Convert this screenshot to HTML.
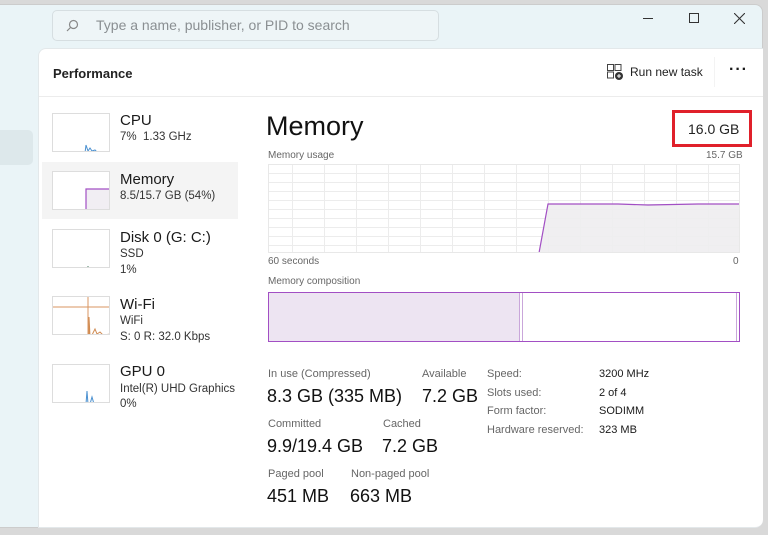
<!DOCTYPE html>
<html><head><meta charset="utf-8"><style>
*{margin:0;padding:0;box-sizing:border-box}
body{width:768px;height:535px;background:#d9d9d9;font-family:"Liberation Sans",sans-serif;position:relative;overflow:hidden;color:#1a1a1a}
.a{position:absolute;white-space:nowrap}
#win{position:absolute;left:0;top:4px;width:763px;height:524px;background:#eaf4f7;border-radius:0 8px 8px 0;border:1px solid #ccc;border-left:none}
#panel{position:absolute;left:38px;top:48px;width:725px;height:480px;background:#fff;border-radius:8px 0 8px 0;border:1px solid #e3e8ea;border-right:none}
.thumb{position:absolute;width:58px;height:39px;border:1px solid #ddd;background:#fff;overflow:hidden}
.t1{font-size:15px}
.t2{font-size:11.5px;color:#333}
.lbl{font-size:11px;color:#666}
.big{font-size:18px;color:#111}
</style></head><body>
<div id="win"></div>
<div class="a" style="left:52px;top:10px;width:387px;height:31px;border:1px solid #d6dee1;border-radius:5px;background:#eef5f7"></div>
<svg class="a" style="left:66px;top:19px" width="13" height="13"><circle cx="7.5" cy="5.5" r="4" fill="none" stroke="#888" stroke-width="1.2"/><line x1="4.5" y1="8.5" x2="1" y2="12" stroke="#888" stroke-width="1.2"/></svg>
<div class="a" style="left:96px;top:17px;font-size:14px;color:#8a8f92">Type a name, publisher, or PID to search</div>
<div class="a" style="left:643px;top:18px;width:10px;height:1px;background:#333"></div>
<div class="a" style="left:689px;top:13px;width:10px;height:10px;border:1px solid #333"></div>
<svg class="a" style="left:734px;top:13px" width="11" height="11"><path d="M0 0L11 11M11 0L0 11" stroke="#333" stroke-width="1.1"/></svg>
<div class="a" style="left:0;top:130px;width:33px;height:35px;background:#dde8eb;border-radius:0 5px 5px 0"></div>
<div id="panel"></div>
<div class="a" style="left:53px;top:66px;font-size:13px;font-weight:bold;color:#222">Performance</div>
<div class="a" style="left:39px;top:96px;width:724px;height:1px;background:#ececec"></div>
<svg class="a" style="left:607px;top:64px" width="17" height="16"><rect x="0.5" y="0.5" width="6" height="6" fill="none" stroke="#444"/><rect x="8" y="0.5" width="6" height="6" fill="none" stroke="#444"/><rect x="0.5" y="8" width="6" height="6" fill="none" stroke="#444"/><circle cx="12" cy="12" r="4" fill="#333"/><path d="M12 10v4M10 12h4" stroke="#fff" stroke-width="1"/></svg>
<div class="a" style="left:630px;top:65px;font-size:12px;color:#222">Run new task</div>
<div class="a" style="left:714px;top:57px;width:1px;height:30px;background:#f3f3f3"></div>
<div class="a" style="left:729px;top:61px;font-size:16px;font-weight:bold;letter-spacing:1px">···</div>

<div class="a" style="left:42px;top:162px;width:196px;height:57px;background:#f4f4f4"></div>
<div class="thumb" style="left:52px;top:113px"><svg width="58" height="39"><path d="M32 39L33 31 35 37 37 34 39 37 42 36 44 38 58 38" stroke="#4a90d0" fill="none" stroke-width="1"/></svg></div>
<div class="a t1" style="left:120px;top:112px">CPU</div><div class="a t2" style="left:120px;top:131px">7% &nbsp;1.33 GHz</div>
<div class="thumb" style="left:52px;top:171px"><svg width="58" height="39"><rect x="33" y="17" width="25" height="22" fill="#f1eef3"/><path d="M33 39V17H58" stroke="#a24fc4" fill="none" stroke-width="1.2"/></svg></div>
<div class="a t1" style="left:120px;top:171px">Memory</div><div class="a t2" style="left:120px;top:190px">8.5/15.7 GB (54%)</div>
<div class="thumb" style="left:52px;top:229px"><svg width="58" height="39"><circle cx="35" cy="37" r="1" fill="#8a9"/></svg></div>
<div class="a t1" style="left:120px;top:229px">Disk 0 (G: C:)</div><div class="a t2" style="left:120px;top:248px">SSD</div><div class="a t2" style="left:120px;top:264px">1%</div>
<div class="thumb" style="left:52px;top:296px"><svg width="58" height="39"><path d="M0 10H58M35 0V39" stroke="#d89660" stroke-width="1"/><path d="M36 39V20L37 39M39 38L42 32 44 37 47 35 50 38 58 37" stroke="#d08a50" fill="none" stroke-width="1"/></svg></div>
<div class="a t1" style="left:120px;top:296px">Wi-Fi</div><div class="a t2" style="left:120px;top:315px">WiFi</div><div class="a t2" style="left:120px;top:331px">S: 0 R: 32.0 Kbps</div>
<div class="thumb" style="left:52px;top:364px"><svg width="58" height="39"><path d="M33 39L34 26 35 39M37 39L39 32 41 39" stroke="#4a90d0" fill="none" stroke-width="1"/></svg></div>
<div class="a t1" style="left:120px;top:363px">GPU 0</div><div class="a t2" style="left:120px;top:383px">Intel(R) UHD Graphics</div><div class="a t2" style="left:120px;top:398px">0%</div>

<div class="a" style="left:266px;top:111px;font-size:27px;color:#111">Memory</div>
<div class="a" style="left:672px;top:110px;width:80px;height:37px;border:3px solid #e0202a"></div>
<div class="a" style="left:688px;top:121px;font-size:14px;color:#222">16.0 GB</div>
<div class="a lbl" style="left:268px;top:150px;font-size:10px">Memory usage</div>
<div class="a lbl" style="left:706px;top:150px;font-size:10px">15.7 GB</div>
<svg class="a" style="left:268px;top:164px" width="472" height="89">
<defs><pattern id="g" x="-8" y="0" width="32" height="9" patternUnits="userSpaceOnUse"><path d="M0.5 0V9M0 0.5H32" stroke="#ececec" fill="none"/></pattern></defs>
<rect x="0" y="0" width="472" height="89" fill="url(#g)"/>
<path d="M271 89L280 40 471 40V89Z" fill="#f0eff1"/>
<rect x="0" y="0" width="472" height="89" fill="url(#g)" opacity="0.5"/>
<path d="M271 89L280 40 350 40 380 41 430 40 471 40" stroke="#a24fc4" fill="none" stroke-width="1.2"/>
<rect x="0.5" y="0.5" width="471" height="88" fill="none" stroke="#e8e8e8"/>
</svg>
<div class="a lbl" style="left:268px;top:256px;font-size:10px">60 seconds</div>
<div class="a lbl" style="left:733px;top:256px;font-size:10px">0</div>
<div class="a lbl" style="left:268px;top:276px;font-size:10px">Memory composition</div>
<svg class="a" style="left:268px;top:292px" width="472" height="50">
<rect x="1" y="1" width="251" height="48" fill="#ede4f2"/>
<path d="M251.5 1V49M254.5 1V49M468.5 1V49" stroke="#c9a6da"/>
<rect x="0.5" y="0.5" width="471" height="49" fill="none" stroke="#a24fc4"/>
</svg>

<div class="a lbl" style="left:268px;top:368px">In use (Compressed)</div>
<div class="a big" style="left:267px;top:386px">8.3 GB (335 MB)</div>
<div class="a lbl" style="left:422px;top:368px">Available</div>
<div class="a big" style="left:422px;top:386px">7.2 GB</div>
<div class="a lbl" style="left:268px;top:418px">Committed</div>
<div class="a big" style="left:267px;top:436px">9.9/19.4 GB</div>
<div class="a lbl" style="left:383px;top:418px">Cached</div>
<div class="a big" style="left:382px;top:436px">7.2 GB</div>
<div class="a lbl" style="left:268px;top:468px">Paged pool</div>
<div class="a big" style="left:267px;top:486px">451 MB</div>
<div class="a lbl" style="left:351px;top:468px">Non-paged pool</div>
<div class="a big" style="left:350px;top:486px">663 MB</div>

<div class="a lbl" style="left:487px;top:368px">Speed:</div><div class="a" style="left:599px;top:368px;font-size:11px">3200 MHz</div>
<div class="a lbl" style="left:487px;top:387px">Slots used:</div><div class="a" style="left:599px;top:387px;font-size:11px">2 of 4</div>
<div class="a lbl" style="left:487px;top:405px">Form factor:</div><div class="a" style="left:599px;top:405px;font-size:11px">SODIMM</div>
<div class="a lbl" style="left:487px;top:424px">Hardware reserved:</div><div class="a" style="left:599px;top:424px;font-size:11px">323 MB</div>
</body></html>
